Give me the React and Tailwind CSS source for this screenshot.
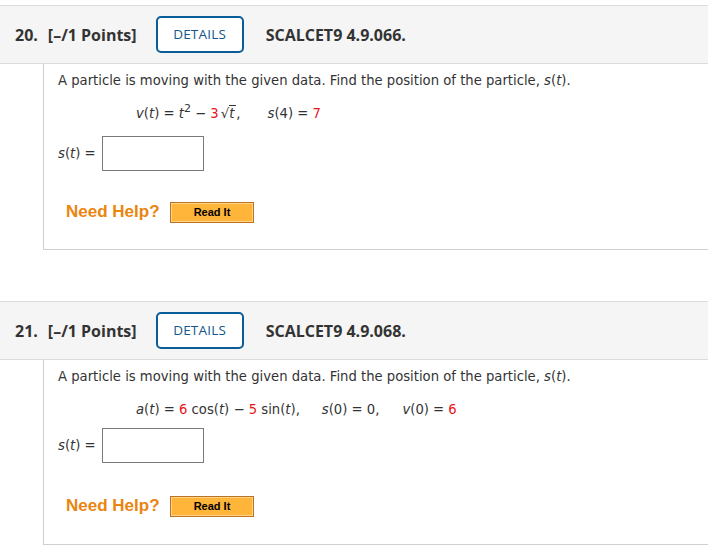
import React from 'react';

const math = { fontFamily: '"DejaVu Sans", Verdana, sans-serif' };

function Header({ num, code }) {
  return (
    <div
      className="flex items-center h-[59px] border-t border-b border-[#dcdcdc] bg-[#f5f5f5] pl-[15px] text-[16px] font-bold text-[#333]"
      style={{ fontFamily: '"Open Sans", sans-serif' }}
    >
      <span>{num}.</span>
      <span className="ml-[10px]">[–/1 Points]</span>
      <button className="ml-[19px] w-[88px] h-[37px] border-2 border-[#0b5d97] rounded-[5px] bg-white text-[13.5px] font-medium text-[#12588a] tracking-[0.2px]">
        DETAILS
      </button>
      <span className="ml-[22px]">{code}</span>
    </div>
  );
}

function ReadIt() {
  return (
    <button className="w-[84px] h-[21px] border border-[#bb7222] bg-[#ffb43a] p-0">
      <span
        className="flex items-center justify-center w-full h-full border border-[#ffd488] text-[11px] font-bold text-black"
        style={{ fontFamily: '"Liberation Sans", Arial, sans-serif' }}
      >
        Read It
      </span>
    </button>
  );
}

function Red({ children }) {
  return <span className="text-[#e8151b]">{children}</span>;
}

function Question({ num, code, formula, boxMt, helpMt, pb, mb }) {
  return (
    <div className={mb}>
      <Header num={num} code={code} />
      <div className={`ml-[43px] border-l border-b border-[#cfcfcf] pl-[14px] pt-[9px] ${pb}`}>
        <div className="text-[13.2px] leading-[16px] text-[#333]" style={math}>
          A particle is moving with the given data. Find the position of the particle, <i>s</i>(<i>t</i>).
        </div>
        <div className="mt-[17px] pl-[78px] text-[13.2px] leading-[16px] h-[16px] text-[#333] whitespace-nowrap" style={math}>
          {formula}
        </div>
        <div className={`flex items-center ${boxMt}`}>
          <span className="text-[13.2px] text-[#333] w-[44px]" style={math}>
            <i>s</i>(<i>t</i>) =
          </span>
          <div className="w-[102px] h-[35px] border border-[#7a7a7a] bg-white"></div>
        </div>
        <div className={`flex items-center h-[22px] pl-[8px] ${helpMt}`}>
          <span
            className="text-[17px] font-bold text-[#ea8510] w-[104px]"
            style={{ fontFamily: '"Liberation Sans", Arial, sans-serif' }}
          >
            Need Help?
          </span>
          <ReadIt />
        </div>
      </div>
    </div>
  );
}

export default function App() {
  const f1 = (
    <>
      <i>v</i>(<i>t</i>) = <i>t</i>
      <sup className="text-[11px] -top-[6px]">2</sup> − <Red>3</Red>
      <span className="ml-[2px]">√</span>
      <span className="border-t border-[#333] pr-[2px]"><i>t</i></span>,
      <span className="ml-[27px]"><i>s</i>(4) = <Red>7</Red></span>
    </>
  );
  const f2 = (
    <>
      <i>a</i>(<i>t</i>) = <Red>6</Red> cos(<i>t</i>) − <Red>5</Red> sin(<i>t</i>),
      <span className="ml-[22px]"><i>s</i>(0) = 0,</span>
      <span className="ml-[23px]"><i>v</i>(0) = <Red>6</Red></span>
    </>
  );
  return (
    <div className="w-[708px] h-[551px] bg-white pt-[5px] overflow-hidden">
      <Question num="20" code="SCALCET9 4.9.066." formula={f1} boxMt="mt-[14px]" helpMt="mt-[30px]" pb="pb-[26px]" mb="mb-[51px]" />
      <Question num="21" code="SCALCET9 4.9.068." formula={f2} boxMt="mt-[10px]" helpMt="mt-[32px]" pb="pb-[27px]" mb="" />
    </div>
  );
}
